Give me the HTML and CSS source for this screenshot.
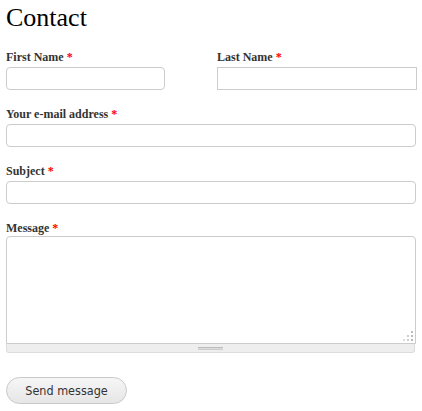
FILE: index.html
```html
<!DOCTYPE html>
<html>
<head>
<meta charset="utf-8">
<link rel="stylesheet" href="styles.css">
</head>
<body>
<div class="page">
  <h1 class="title">Contact</h1>
  <form class="contact-form">
    <div class="row-names">
      <div class="form-item">
        <label class="label">First Name <span class="req">*</span></label>
        <input class="text-input first" type="text">
      </div>
      <div class="form-item">
        <label class="label">Last Name <span class="req">*</span></label>
        <input class="text-input square" type="text">
      </div>
    </div>
    <div class="form-item">
      <label class="label">Your e-mail address <span class="req">*</span></label>
      <input class="text-input" type="text">
    </div>
    <div class="form-item">
      <label class="label">Subject <span class="req">*</span></label>
      <input class="text-input" type="text">
    </div>
    <div class="form-item message-item">
      <label class="label label-msg">Message <span class="req">*</span></label>
      <div class="textarea-wrap">
        <textarea class="textarea"></textarea>
        <svg class="resize-dots" width="10" height="10" viewBox="0 0 10 10">
          <rect x="8" y="0" width="2" height="2" fill="#bbb"/>
          <rect x="8" y="4" width="2" height="2" fill="#bbb"/>
          <rect x="8" y="8" width="2" height="2" fill="#bbb"/>
          <rect x="4" y="4" width="2" height="2" fill="#ccc"/>
          <rect x="4" y="8" width="2" height="2" fill="#ccc"/>
          <rect x="0" y="8" width="2" height="2" fill="#ddd"/>
        </svg>
      </div>
      <div class="grippie"><span class="grip-lines"></span></div>
    </div>
    <div class="actions">
      <button class="btn" type="button">Send message</button>
    </div>
  </form>
</div>
</body>
</html>
```

FILE: styles.css
```css
html, body {
  margin: 0;
  padding: 0;
  background: #fff;
}
.page {
  padding: 0 6px;
  font-family: "Liberation Serif", serif;
  color: #333;
}
.title {
  margin: 3px 0 0 0;
  font-size: 26px;
  line-height: 30px;
  font-weight: normal;
  color: #000;
}
.contact-form {
  margin-top: 16px;
}
.row-names {
  display: grid;
  grid-template-columns: 211px 200px;
}
.form-item {
  margin-bottom: 16px;
}
.label {
  display: block;
  font-size: 12px;
  line-height: 16px;
  font-weight: bold;
  margin-bottom: 2px;
  color: #333;
}
.req {
  color: #f00;
}
.text-input {
  display: block;
  box-sizing: border-box;
  width: 410px;
  height: 23px;
  margin: 0;
  border: 1px solid #ccc;
  border-radius: 4px;
  background: #fff;
  padding: 2px 4px;
  font-size: 12px;
}
.text-input.first {
  width: 159px;
}
.text-input.square {
  width: 200px;
  border-radius: 0;
}
.label-msg {
  margin-bottom: 0;
}
.textarea-wrap {
  position: relative;
  width: 410px;
}
.textarea {
  display: block;
  box-sizing: border-box;
  width: 410px;
  height: 108px;
  margin: 0;
  border: 1px solid #ccc;
  border-radius: 4px 4px 0 0;
  resize: none;
  background: #fff;
}
.resize-dots {
  position: absolute;
  right: 3px;
  bottom: 3px;
}
.grippie {
  box-sizing: border-box;
  width: 409px;
  height: 9px;
  background: #eee;
  border: 1px solid #ddd;
  border-top: none;
  border-radius: 0 0 3px 3px;
  display: flex;
  justify-content: center;
  align-items: center;
}
.grip-lines {
  display: block;
  width: 25px;
  height: 3px;
  border-top: 1px solid #bbb;
  border-bottom: 1px solid #ccc;
  background: #ddd;
  box-sizing: border-box;
}
.actions {
  margin-top: 24px;
}
.btn {
  box-sizing: border-box;
  width: 121px;
  height: 27px;
  margin: 0;
  padding: 0;
  border: 1px solid #c8c8c8;
  border-radius: 14px;
  background: linear-gradient(#f6f6f6, #e6e6e6);
  font-family: "DejaVu Sans Condensed", "DejaVu Sans", sans-serif;
  font-size: 12.5px;
  color: #333;
}
```
